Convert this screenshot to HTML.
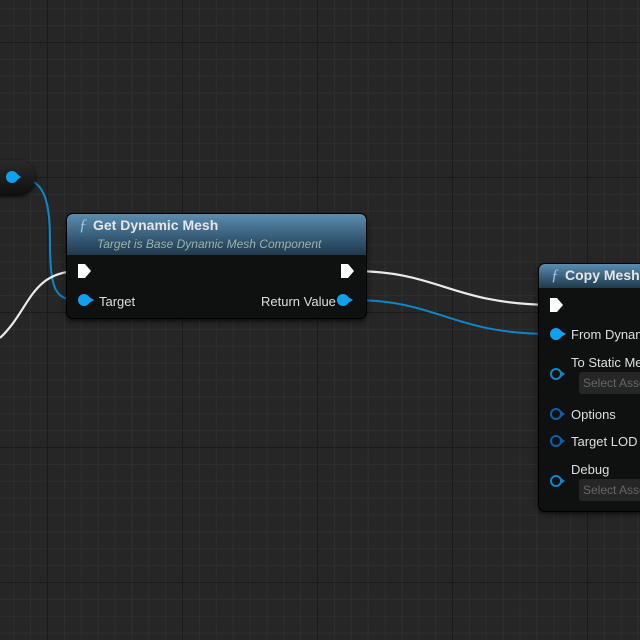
<!DOCTYPE html>
<html><head><style>
html,body{margin:0;padding:0;width:640px;height:640px;overflow:hidden;background:#262626;font-family:"Liberation Sans",sans-serif;}
#bg{position:absolute;left:0;top:0;width:640px;height:640px;
background-image:
linear-gradient(to right,#1b1b1b 1px,transparent 1px),
linear-gradient(to bottom,#1b1b1b 1px,transparent 1px),
linear-gradient(to right,#2f2f2f 1px,transparent 1px),
linear-gradient(to bottom,#2f2f2f 1px,transparent 1px);
background-size:135px 135px,135px 135px,16.875px 16.875px,16.875px 16.875px;
background-position:47px 0,0 42px,13.25px 0,0 8.25px;}
.node{position:absolute;background:#0f1110;border-radius:7px;box-shadow:0 2px 6px rgba(0,0,0,.7);border:1px solid #000;overflow:hidden}
.hdr{background:linear-gradient(to bottom,#5b8db0,#2e5069 70%,#203a4c);color:#e6e6e6;font-weight:bold;font-size:14px;white-space:nowrap}
.f{color:#9cc7ea;font-style:italic;font-family:"Liberation Serif",serif;font-weight:normal;font-size:16px;margin-right:6px}
.t{position:absolute;color:#dedede;font-size:13px;white-space:nowrap}
.box{position:absolute;background:#262626;border-radius:3px;color:#666;font-size:12px;padding:4px 4px;white-space:nowrap}
svg{position:absolute;left:0;top:0}
</style></head><body>
<div id="bg"></div>
<svg width="640" height="640">
<path d="M12 177 C40 177,50 190,50 240 C50 290,55 300,78 300" stroke="#0e86c8" stroke-width="2" fill="none"/>
<path d="M0 338 C30 310,30 272,78 271" stroke="#eaeaea" stroke-width="2.2" fill="none"/>
<path d="M352 271 C440 271,450 304,552 305" stroke="#eaeaea" stroke-width="2.2" fill="none"/>
<path d="M352 300 C440 300,450 334,552 334" stroke="#0e86c8" stroke-width="2" fill="none"/>
</svg>
<div style="position:absolute;left:-20px;top:160px;width:55px;height:34px;border-radius:17px;background:linear-gradient(#2a2a2a,#111);box-shadow:0 2px 5px #000"></div>
<div class="node" style="left:66px;top:213px;width:299px;height:104px">
 <div class="hdr" style="height:41px;padding:3px 0 0 12px;box-sizing:border-box"><span class="f">ƒ</span>Get Dynamic Mesh
 <div style="font-weight:normal;font-style:italic;font-size:12px;color:#9fb0a8;margin:2px 0 0 18px">Target is Base Dynamic Mesh Component</div></div>
 <div class="t" style="left:32px;top:80px">Target</div>
 <div class="t" style="left:194px;top:80px">Return Value</div>
</div>
<div class="node" style="left:538px;top:263px;width:110px;height:247px">
 <div class="hdr" style="height:24px;padding:3px 0 0 12px;box-sizing:border-box"><span class="f">ƒ</span>Copy Mesh</div>
 <div class="t" style="left:32px;top:63px">From Dynamic</div>
 <div class="t" style="left:32px;top:91px">To Static Mesh</div>
 <div class="box" style="left:40px;top:108px;width:70px">Select Asset</div>
 <div class="t" style="left:32px;top:143px">Options</div>
 <div class="t" style="left:32px;top:170px">Target LOD</div>
 <div class="t" style="left:32px;top:198px">Debug</div>
 <div class="box" style="left:40px;top:215px;width:70px">Select Asset</div>
</div>
<svg width="640" height="640">
<circle cx="12" cy="177" r="6" fill="#0fa0f0"/><path d="M17 174 L21 177 L17 180Z" fill="#0fa0f0"/>
<path d="M78 264 h7 l6 7 l-6 7 h-7z" fill="#fff"/>
<path d="M341 264 h7 l6 7 l-6 7 h-7z" fill="#fff"/>
<path d="M550 298 h7 l6 7 l-6 7 h-7z" fill="#fff"/>
<circle cx="84" cy="300" r="6" fill="#0fa0f0"/><path d="M89 297 L94 300 L89 303Z" fill="#0fa0f0"/>
<circle cx="343" cy="300" r="6" fill="#0fa0f0"/><path d="M348 297 L353 300 L348 303Z" fill="#0fa0f0"/>
<circle cx="556" cy="334" r="6" fill="#0fa0f0"/><path d="M561 331 L566 334 L561 337Z" fill="#0fa0f0"/>
<circle cx="556" cy="374" r="5" fill="none" stroke="#0e86c8" stroke-width="2"/><path d="M561 371 L565 374 L561 377Z" fill="#0e86c8"/>
<circle cx="556" cy="414" r="5" fill="none" stroke="#0d5fa8" stroke-width="2"/><path d="M561 411 L565 414 L561 417Z" fill="#0d5fa8"/>
<circle cx="556" cy="441" r="5" fill="none" stroke="#0d5fa8" stroke-width="2"/><path d="M561 438 L565 441 L561 444Z" fill="#0d5fa8"/>
<circle cx="556" cy="481" r="5" fill="none" stroke="#0e86c8" stroke-width="2"/><path d="M561 478 L565 481 L561 484Z" fill="#0e86c8"/>
</svg>
</body></html>
